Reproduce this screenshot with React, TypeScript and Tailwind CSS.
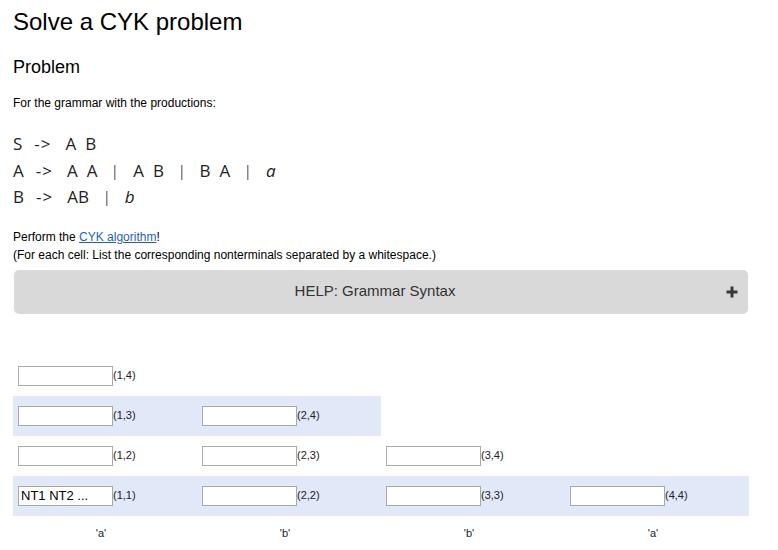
import { useState } from "react";

const rows = [
  ["(1,4)"],
  ["(1,3)", "(2,4)"],
  ["(1,2)", "(2,3)", "(3,4)"],
  ["(1,1)", "(2,2)", "(3,3)", "(4,4)"],
];

const word = ["'a'", "'b'", "'b'", "'a'"];

const grammar: string[][] = [
  ["S", "->", "A", "B"],
  ["A", "->", "A", "A", "|", "A", "B", "|", "B", "A", "|", "a"],
  ["B", "->", "AB", "|", "b"],
];

function Token({ t }: { t: string }) {
  if (t === "->") return <span className="ml-[3px] mr-[5px] tracking-[1px]">-&gt;</span>;
  if (t === "|") return <span className="inline-block mx-[5px] text-[14px] text-[#444] will-change-transform">|</span>;
  if (t === "a" || t === "b") return <i>{t}</i>;
  return <span>{t}</span>;
}

function Cell({ label, first }: { label: string; first: boolean }) {
  return (
    <div className="w-[184px] h-[40px] flex items-center pl-[5px]">
      <input
        type="text"
        placeholder={first ? "NT1 NT2 ..." : ""}
        className="w-[95px] h-[20px] border border-[#a9a9a9] bg-white px-[2px] text-[13px] text-black placeholder:text-black outline-none"
      />
      <span className="text-[11px] text-[#222]">{label}</span>
    </div>
  );
}

export default function App() {
  const [open, setOpen] = useState(false);

  return (
    <div className="px-[13px] text-black bg-white min-h-[550px] w-[778px]" style={{ fontFamily: '"Liberation Sans", Arial, sans-serif' }}>
      <h1 className="pt-[8px] text-[24px] leading-[28px]">Solve a CYK problem</h1>
      <h2 className="mt-[20px] text-[18px] leading-[22px]">Problem</h2>
      <p className="mt-[17px] text-[12px] leading-[16px]">For the grammar with the productions:</p>

      <div
        className="mt-[20px] text-[17px] leading-[26.5px] text-[#222]"
        style={{ fontFamily: '"Open Sans", "DejaVu Sans", sans-serif' }}
      >
        {grammar.map((line, i) => (
          <div key={i} className="flex items-center gap-[9px] h-[26.5px]">
            {line.map((t, j) => (
              <Token key={j} t={t} />
            ))}
          </div>
        ))}
      </div>

      <p className="mt-[17px] text-[12px] leading-[18px]">
        Perform the{" "}
        <a href="#" className="text-[#1f5fc4] underline">
          CYK algorithm
        </a>
        !
      </p>
      <p className="text-[12px] leading-[18px]">
        (For each cell: List the corresponding nonterminals separated by a whitespace.)
      </p>

      <button
        type="button"
        onClick={() => setOpen(!open)}
        className="mt-[6px] ml-[1px] w-[734px] h-[44px] rounded-[5px] bg-[#d9d9d9] flex items-center text-[#333]"
      >
        <span className="flex-1 text-center text-[15px] pl-[16px]">HELP: Grammar Syntax</span>
        <span className="w-[24px] mr-[4px] flex justify-center">
          <svg width="12" height="12" viewBox="0 0 12 12">
            <path d="M6 0.5v11M0.5 6h11" stroke="#3a3a3a" strokeWidth="3" />
          </svg>
        </span>
      </button>

      <div className="mt-[42px]">
        {rows.map((r, i) => (
          <div key={i} className={`flex ${i % 2 === 1 ? "bg-[#e1e8f8]" : ""} w-fit`}>
            {r.map((label, j) => (
              <Cell key={label} label={label} first={i === 3 && j === 0} />
            ))}
          </div>
        ))}
        <div className="flex">
          {word.map((w, i) => (
            <div key={i} className="w-[184px] h-[30px] pt-[6px] flex items-center justify-center pr-[8px] text-[11px] text-[#222]">
              {w}
            </div>
          ))}
        </div>
      </div>
    </div>
  );
}
